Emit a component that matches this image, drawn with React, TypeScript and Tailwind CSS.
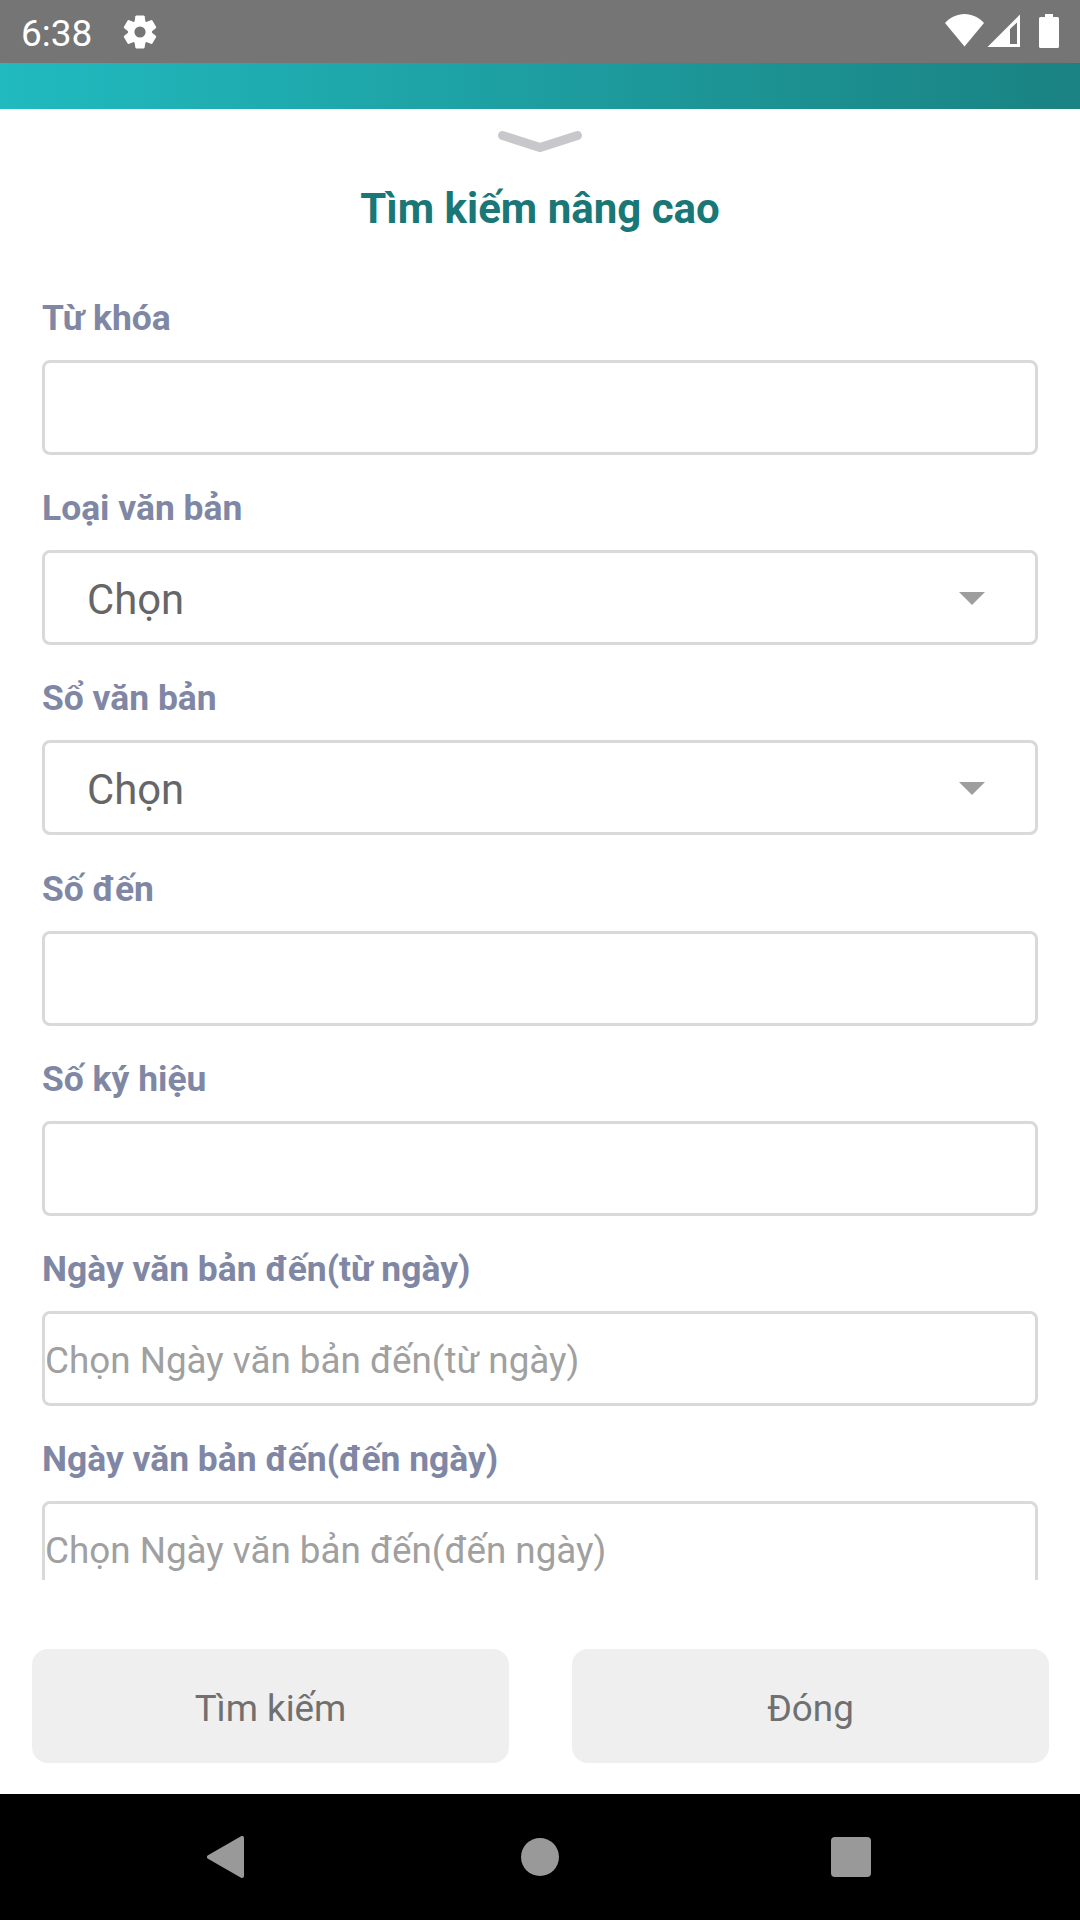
import { useState } from 'react';

interface Field {
  key: string;
  label: string;
  type: 'text' | 'select' | 'date';
}

const FIELDS: Field[] = [
  { key: 'keyword', label: 'Từ khóa', type: 'text' },
  { key: 'docType', label: 'Loại văn bản', type: 'select' },
  { key: 'docBook', label: 'Sổ văn bản', type: 'select' },
  { key: 'arrivalNo', label: 'Số đến', type: 'text' },
  { key: 'symbolNo', label: 'Số ký hiệu', type: 'text' },
  { key: 'fromDate', label: 'Ngày văn bản đến(từ ngày)', type: 'date' },
  { key: 'toDate', label: 'Ngày văn bản đến(đến ngày)', type: 'date' },
];

function GearIcon() {
  return (
    <svg className="ml-[32px]" width="34" height="34" viewBox="-17 -17 34 34" fill="none">
      <circle r="8.800" stroke="currentColor" strokeWidth="6.400" />
      {[0, 60, 120, 180, 240, 300].map(a => (
        <path
          key={a}
          transform={`rotate(${a})`}
          d="M-3.800 -16.500H3.800L4.600 -15.800L5.400 -10.500H-5.400L-4.600 -15.800z"
          fill="currentColor"
        />
      ))}
    </svg>
  );
}

function StatusBar() {
  return (
    <div className="flex h-[63px] shrink-0 items-center bg-[#757575] pl-[21px] pr-[21px] text-white">
      <span className="w-[70px] pt-[3px] text-[37px] leading-none">6:38</span>
      <GearIcon />
      <svg className="mb-px ml-auto" width="114" height="34" viewBox="0 0 114 34" fill="currentColor">
        <path d="M0 9C5 3.500 12 0 19.500 0S34 3.500 39 9L19.500 32.500z" />
        <path fillRule="evenodd" d="M75 0.500V33H42.500zM72 8.500L65 15V30H72z" />
        <path d="M100 0h8v3h4.500a1.500 1.500 0 0 1 1.500 1.500v28a1.500 1.500 0 0 1-1.500 1.500h-17a1.500 1.500 0 0 1-1.500-1.500v-28a1.500 1.500 0 0 1 1.500-1.500h4.500z" />
      </svg>
    </div>
  );
}

function FieldRow({ field, value, onChange }: { field: Field; value: string; onChange: (v: string) => void }) {
  return (
    <div className="flex flex-col gap-[22px]">
      <label className="text-[35.44px] font-bold leading-10 text-[#7f87a5]">{field.label}</label>
      <div className="flex h-[95px] items-center rounded-[8px] border-3 border-[#d9d9d9] bg-white">
        {field.type === 'select' && (
          <button className="flex h-full w-full items-center justify-between pl-[42px] pr-[50px] pt-1 text-[#666666]">
            <span className="text-[41.8px] leading-none">Chọn</span>
            <svg className="-mt-0.5" width="26" height="13" viewBox="0 0 26 13" fill="#9e9e9e">
              <path d="M0 0h26L13 13z" />
            </svg>
          </button>
        )}
        {field.type === 'text' && (
          <input value={value} onChange={e => onChange(e.target.value)} className="h-full w-full px-4 text-[37px] outline-none" />
        )}
        {field.type === 'date' && (
          <button className="h-full w-full pt-1.5 text-left text-[36.8px] leading-none text-[#a0a0a0]">
            {value || `Chọn ${field.label}`}
          </button>
        )}
      </div>
    </div>
  );
}

export default function App() {
  const [values, setValues] = useState<Record<string, string>>({});

  return (
    <div className="flex h-[1920px] w-[1080px] flex-col overflow-hidden bg-white font-['Roboto',sans-serif]">
      <StatusBar />
      <div className="h-[46px] shrink-0 bg-linear-to-r from-[#20babf] to-[#1a8282]" />

      {/* Sheet header */}
      <div className="flex h-[189px] shrink-0 flex-col items-center pt-[22px]">
        <svg width="84" height="22" viewBox="0 0 84 22" fill="none" stroke="#c7c7cc" strokeWidth="9" strokeLinecap="round">
          <path d="M4.500 4.500L42 16.500L79.500 4.500" />
        </svg>
        <h1 className="mt-[31px] text-[42px] font-bold leading-[50px] text-[#1a7777]">Tìm kiếm nâng cao</h1>
      </div>

      {/* Form */}
      <div className="flex h-[1282px] shrink-0 flex-col gap-[33.2px] overflow-hidden px-[42px]">
        {FIELDS.map(f => (
          <FieldRow
            key={f.key}
            field={f}
            value={values[f.key] ?? ''}
            onChange={v => setValues({ ...values, [f.key]: v })}
          />
        ))}
      </div>

      {/* Actions */}
      <div className="flex h-[214px] shrink-0 gap-[63px] pl-8 pr-[31px] pt-[69px]">
        <button className="h-[114px] flex-1 rounded-2xl bg-[#efefef] pt-[5px] text-[36.75px] text-[#707070]">Tìm kiếm</button>
        <button className="h-[114px] flex-1 rounded-2xl bg-[#efefef] pt-[5px] text-[36.75px] text-[#707070]">Đóng</button>
      </div>

      {/* Navigation bar */}
      <div className="flex h-[126px] shrink-0 items-center bg-black pl-[207px]">
        <svg width="37" height="42" viewBox="0 0 37 42" fill="#999999" stroke="#999999" strokeWidth="4" strokeLinejoin="round">
          <path d="M2 21L35 2V40z" />
        </svg>
        <div className="ml-[277px] size-[38px] rounded-full bg-[#999999]" />
        <div className="ml-[272px] size-10 rounded-[4px] bg-[#999999]" />
      </div>
    </div>
  );
}
